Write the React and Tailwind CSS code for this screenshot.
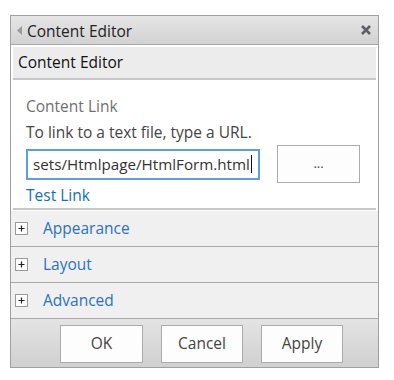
import React from "react";

function PlusBox() {
  return (
    <span className="flex h-[13px] w-[13px] items-center justify-center border border-[#9a9a9a] bg-white">
      <svg width="7" height="7" viewBox="0 0 7 7">
        <path d="M3.5 0.5V6.5M0.5 3.5H6.5" stroke="#222" strokeWidth="1.2" />
      </svg>
    </span>
  );
}

function Row({ label }) {
  return (
    <div className="flex h-[36px] items-center border-b border-[#a8a8a8] bg-[#f0f0f0] pl-[4px]">
      <PlusBox />
      <span className="ml-[15px] text-[15.5px] text-[#2a72c5]">{label}</span>
    </div>
  );
}

export default function App() {
  return (
    <div className="h-[380px] w-[394px] bg-white pt-[15px] pl-[10px]" style={{ fontFamily: '"Open Sans", "Noto Sans", sans-serif' }}>
      <div className="w-[369px] border border-[#a0a0a0] bg-white">
        {/* Title bar */}
        <div className="flex h-[29px] items-center border-b border-[#a8a8a8] bg-gradient-to-b from-[#e6e6e6] to-[#d2d2d2] pl-[6px] pr-[6px]">
          <svg width="5" height="9" viewBox="0 0 5 9" className="mr-[5px]">
            <path d="M5 0L0 4.5L5 9Z" fill="#9a9a9a" />
          </svg>
          <span className="text-[15.5px] leading-[20px] pt-[1px] text-[#222]">Content Editor</span>
          <svg width="12" height="12" viewBox="0 0 12 12" className="ml-auto">
            <path d="M2 2L10 10M10 2L2 10" stroke="#5e5e68" strokeWidth="2.6" />
          </svg>
        </div>
        {/* Subheader */}
        <div className="px-[2px] pt-[2px]">
          <div className="flex h-[33px] items-center border-b-2 border-[#c8c8c8] bg-[#ececec] pl-[5px]">
            <span className="text-[15.5px] text-[#111]">Content Editor</span>
          </div>
        </div>
        {/* Content Link section */}
        <div className="mx-[2px] border-b-2 border-[#c8c8c8] pl-[13px] pt-[16px] pb-[2px]">
          <div className="text-[15.5px] leading-[20px] text-[#707070]">Content Link</div>
          <div className="mt-[6px] text-[15.5px] leading-[20px] text-[#444]">To link to a text file, type a URL.</div>
          <div className="mt-[3px] flex items-center">
            <div className="flex h-[31px] w-[234px] items-center overflow-hidden border-2 border-[#5b9de6] pl-[5px]">
              <span className="whitespace-nowrap text-[15.2px] text-[#333]">sets/Htmlpage/HtmlForm.html</span>
              <span className="ml-[1px] h-[18px] w-[1px] bg-[#111]" />
            </div>
            <div className="ml-[17px] flex h-[38px] w-[83px] items-center justify-center border border-[#ababab] bg-[#fdfdfd] text-[13px] text-[#444]">
              ...
            </div>
          </div>
          <div className="mt-[2px] text-[15.5px] leading-[21px] text-[#0f6fc6]">Test Link</div>
        </div>
        {/* Accordion */}
        <div className="mt-[1px]">
          <Row label="Appearance" />
          <Row label="Layout" />
          <Row label="Advanced" />
        </div>
        {/* Footer */}
        <div className="flex h-[48px] items-start gap-[18px] bg-gradient-to-b from-[#e4e4e4] to-[#d0d0d0] pl-[49px] pt-[6px]">
          <button className="h-[38px] w-[83px] border border-[#ababab] bg-[#fdfdfd] text-[15.5px] text-[#444]">OK</button>
          <button className="h-[38px] w-[82px] border border-[#ababab] bg-[#fdfdfd] text-[15.5px] text-[#444]">Cancel</button>
          <button className="h-[38px] w-[82px] border border-[#ababab] bg-[#fdfdfd] text-[15.5px] text-[#444]">Apply</button>
        </div>
      </div>
    </div>
  );
}
